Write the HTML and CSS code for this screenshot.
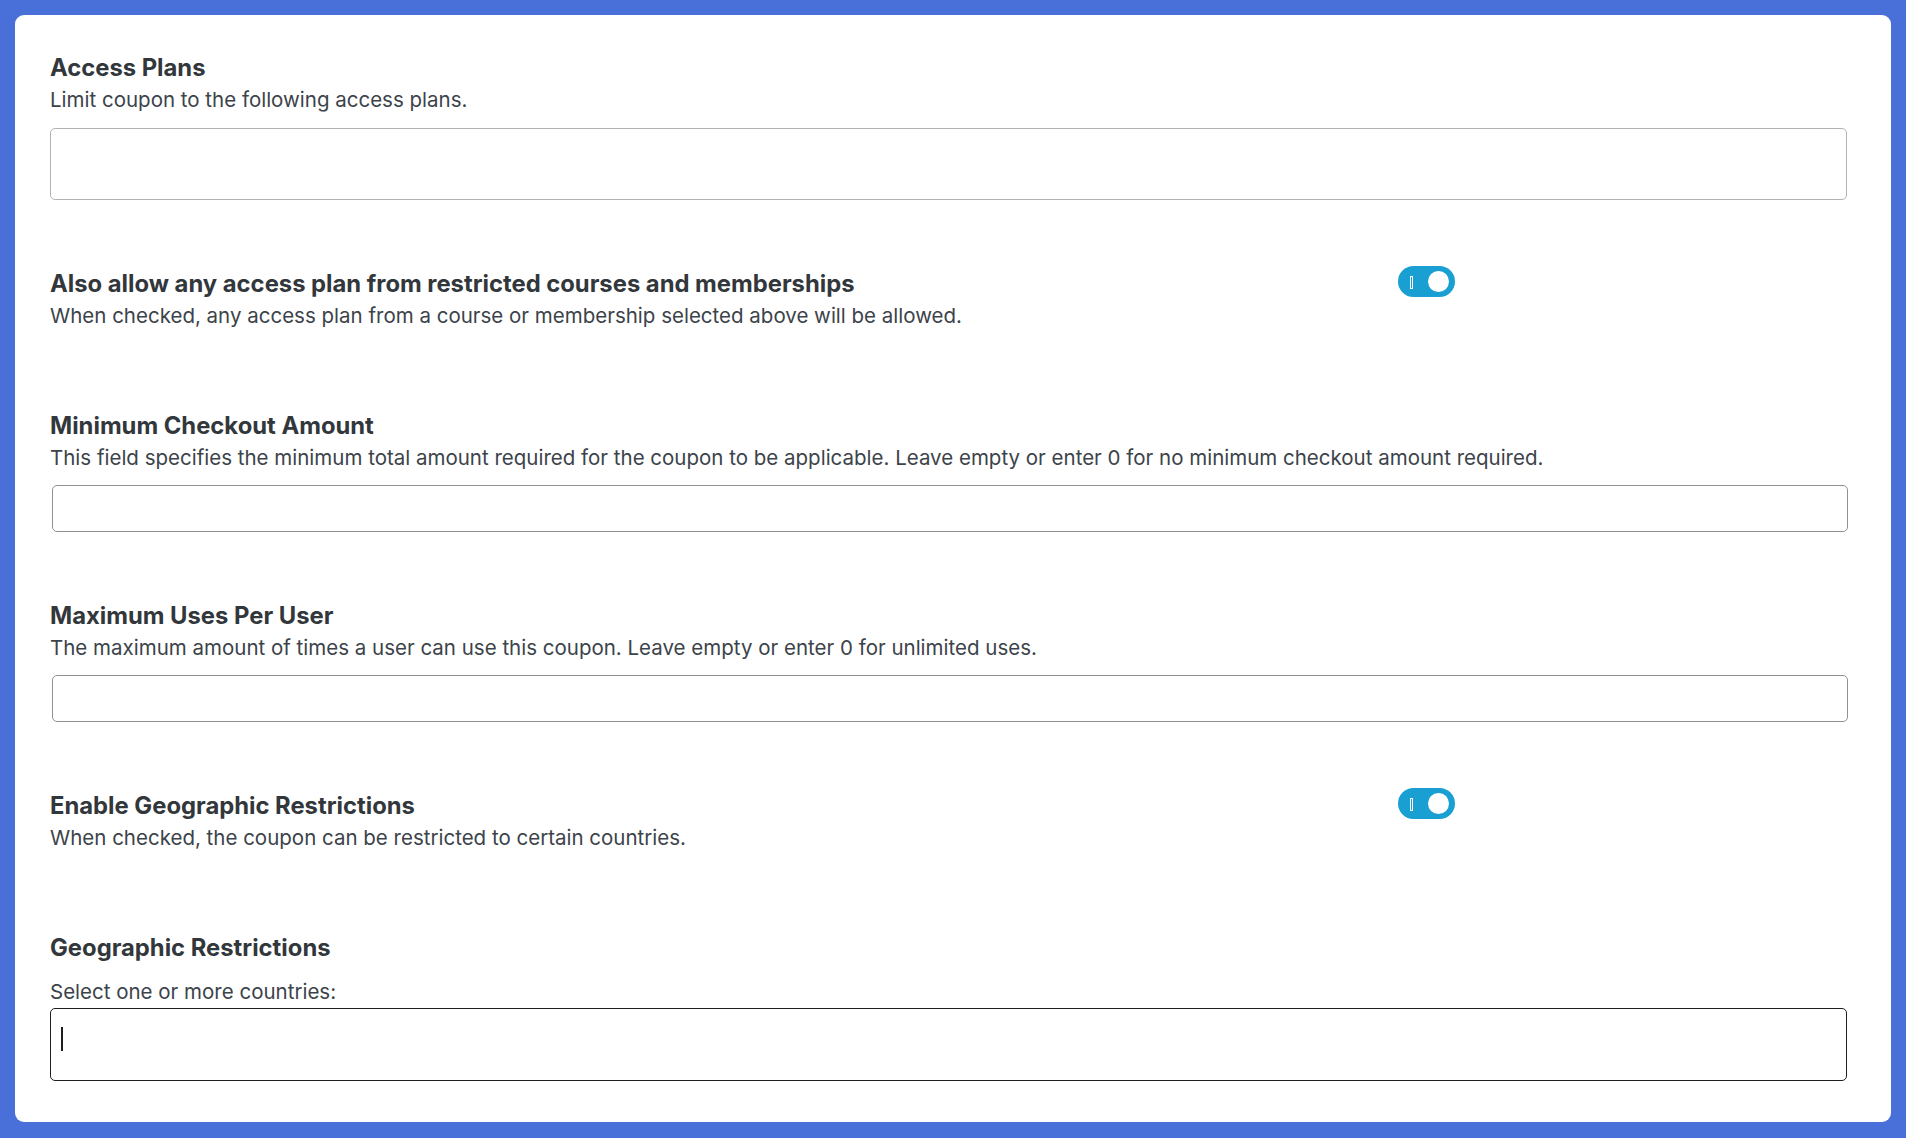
FILE: index.html
```html
<!DOCTYPE html>
<html lang="en">
<head>
    <meta charset="UTF-8">
    <meta name="viewport" content="width=device-width, initial-scale=1.0">
    <title>Coupon Restrictions</title>
    <link rel="stylesheet" href="styles.css">
</head>
<body>
    <main class="card">
        <!-- access plans -->
        <section class="field">
            <h3 class="field-title">Access Plans</h3>
            <p class="field-desc">Limit coupon to the following access plans.</p>
            <div class="select-box select-box-tall"></div>
        </section>

        <section class="field field-toggle">
            <div class="toggle-text">
                <h3 class="field-title">Also allow any access plan from restricted courses and memberships</h3>
                <p class="field-desc">When checked, any access plan from a course or membership selected above will be allowed.</p>
            </div>
            <label class="switch">
                <span class="switch-mark"></span>
                <span class="switch-knob"></span>
            </label>
        </section>

        <!-- amounts -->
        <section class="field">
            <h3 class="field-title">Minimum Checkout Amount</h3>
            <p class="field-desc">This field specifies the minimum total amount required for the coupon to be applicable. Leave empty or enter 0 for no minimum checkout amount required.</p>
            <input type="text" class="text-input">
        </section>

        <section class="field">
            <h3 class="field-title">Maximum Uses Per User</h3>
            <p class="field-desc">The maximum amount of times a user can use this coupon. Leave empty or enter 0 for unlimited uses.</p>
            <input type="text" class="text-input">
        </section>

        <!-- geography -->
        <section class="field field-toggle">
            <div class="toggle-text">
                <h3 class="field-title">Enable Geographic Restrictions</h3>
                <p class="field-desc">When checked, the coupon can be restricted to certain countries.</p>
            </div>
            <label class="switch">
                <span class="switch-mark"></span>
                <span class="switch-knob"></span>
            </label>
        </section>

        <section class="field field-last">
            <h3 class="field-title">Geographic Restrictions</h3>
            <p class="field-label">Select one or more countries:</p>
            <div class="select-box select-box-tall select-box-active">
                <span class="caret"></span>
            </div>
        </section>
    </main>
</body>
</html>
```

FILE: styles.css
```css
/* Global Styles */
body {
    margin: 0;
    padding: 15px 15px 16px 15px;
    background-color: #4870d8;
    font-family: 'Inter', 'Liberation Sans', sans-serif;
    color: #2c3338;
}

/* Card */
.card {
    display: block;
    background-color: #fff;
    border-radius: 9px;
    padding: 38px 44px 41px 35px;
}

.field {
    margin-bottom: 69px;
}

.field-toggle {
    display: grid;
    grid-template-columns: 3fr 1fr;
    margin-bottom: 81px;
}

.field-last {
    margin-bottom: 0;
}

.field-title {
    margin: 0;
    padding-top: 1px;
    font-size: 23.8px;
    line-height: 28px;
    font-weight: 700;
    color: #32373c;
}

.field-desc {
    margin: 4px 0 0;
    font-size: 20.5px;
    line-height: 28px;
    color: #3c434a;
}

.field-label {
    margin: 16px 0 0;
    font-size: 20.5px;
    line-height: 28px;
    color: #3c434a;
}

/* Inputs */
.select-box {
    box-sizing: border-box;
    margin-top: 14px;
    border: 1px solid #b3b3b3;
    border-radius: 5px;
    background: #fff;
}

.select-box-tall {
    height: 72px;
}

.select-box-active {
    margin-top: 2px;
    height: 73px;
    border: 1.5px solid #1e1e1e;
    padding: 18px 0 0 10px;
}

.caret {
    display: block;
    width: 2px;
    height: 24px;
    background-color: #1e1e1e;
}

.text-input {
    display: block;
    box-sizing: border-box;
    width: calc(100% - 1px);
    height: 47px;
    margin-top: 13px;
    margin-left: 2px;
    border: 1px solid #8f9295;
    border-radius: 5px;
    background: #fff;
    font: inherit;
}

/* Toggle switch */
.switch {
    position: relative;
    display: block;
    width: 57px;
    height: 31px;
    margin-top: -3px;
    border-radius: 16px;
    background-color: #1a9fd3;
}

.switch-mark {
    position: absolute;
    left: 12px;
    top: 10px;
    width: 1px;
    height: 11px;
    border: 1px solid #fff;
}

.switch-knob {
    position: absolute;
    right: 6px;
    top: 5px;
    width: 21px;
    height: 21px;
    border-radius: 50%;
    background-color: #fff;
}
```
